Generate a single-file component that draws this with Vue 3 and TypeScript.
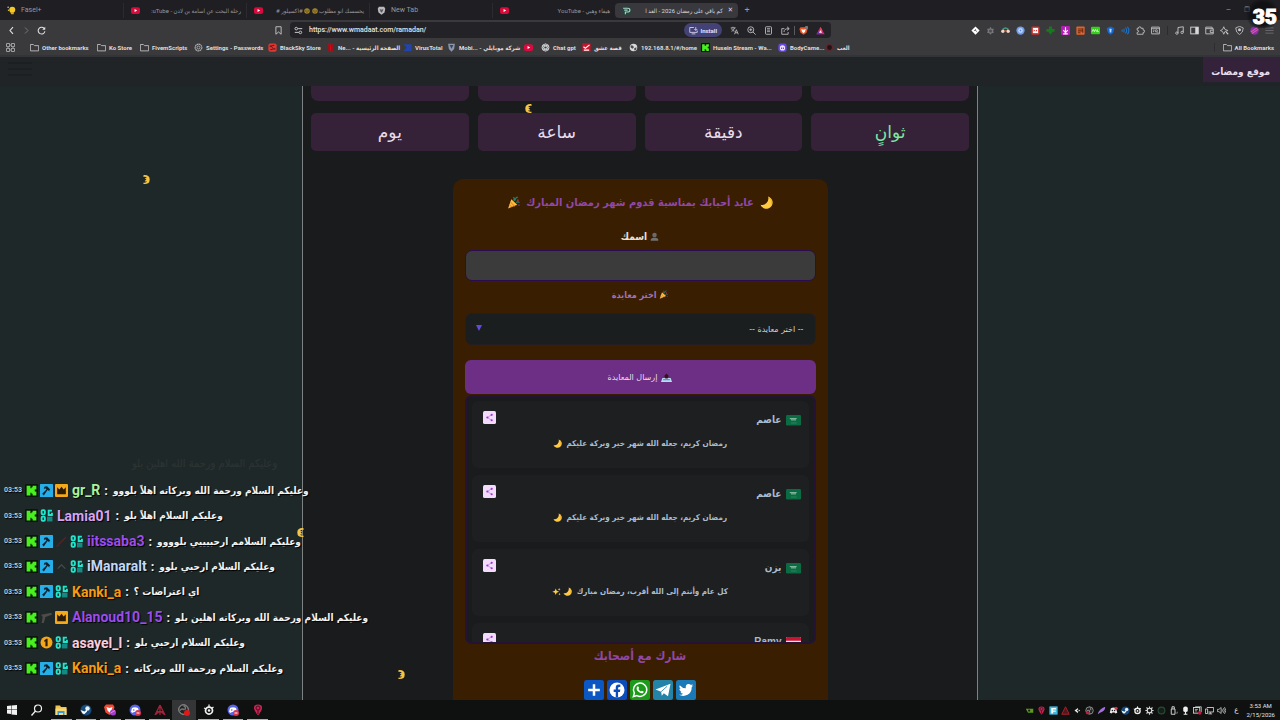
<script setup lang="ts">
import { h, ref } from 'vue'

const glyphs: Record<string, string> = {
  youtube: '<rect x="0" y="3" width="24" height="18" rx="5" fill="#d90a3c"/><path d="M9.5 8v8l7-4z" fill="#fff"/>',
  fasel: '<circle cx="14" cy="10" r="8" fill="#f3c927"/><path d="M9 16h9v6h-7z" fill="#d9ac1c"/><circle cx="3" cy="3" r="2" fill="#d8d8a0"/><circle cx="4" cy="11" r="2" fill="#e8c840"/>',
  shield: '<path d="M5 2h14l3 5-2 10-8 6-8-6L2 7z" fill="#b9babd"/><path d="M7 8l5 2 5-2-2 6-3 4-3-4z" fill="#55565a"/>',
  wmd: '<rect x="1" y="1" width="22" height="22" rx="7" fill="#23463e"/><path d="M3 6h12q6 0 6 5t-7 5H9v6M6 11h9" fill="none" stroke="#a9d5c5" stroke-width="3"/>',
  back: '<path d="M16 3l-8 9 8 9" fill="none" stroke="#e2e2e4" stroke-width="3"/>',
  forward: '<path d="M8 4l8 8-8 8" fill="none" stroke="#77777b" stroke-width="2.6"/>',
  reload: '<path d="M20 8a9 9 0 1 0 1 6" fill="none" stroke="#e2e2e4" stroke-width="2.8"/><path d="M22 2v8h-8z" fill="#e2e2e4"/>',
  bookmark: '<path d="M5 2h14v20l-7-6-7 6z" fill="none" stroke="#c8c8cc" stroke-width="2.4"/>',
  tune: '<path d="M11 7h11M2 17h11" stroke="#d4d4d6" stroke-width="2.5"/><circle cx="6" cy="7" r="3.5" fill="none" stroke="#d4d4d6" stroke-width="2.4"/><circle cx="17" cy="17" r="3.5" fill="none" stroke="#d4d4d6" stroke-width="2.4"/>',
  install: '<path d="M13 4H2v13h20v-5M7 21h10M18 3v8M14 8l4 4 4-4" fill="none" stroke="#dcdcf4" stroke-width="2.2"/>',
  translate: '<path d="M2 5h13M8 2v3M4 14c5-2 7-5 8-9M4 7c2 4 5 6 8 7M12 22l5-12 5 12M14 18h6" fill="none" stroke="#c8c8cc" stroke-width="2.2"/>',
  zoom: '<circle cx="10" cy="10" r="8" fill="none" stroke="#c8c8cc" stroke-width="2.2"/><path d="M16 16l7 7M6 10h8M10 6v8" stroke="#c8c8cc" stroke-width="2.2"/>',
  reader: '<rect x="4" y="2" width="16" height="20" rx="2" fill="none" stroke="#c8c8cc" stroke-width="2.2"/><path d="M8 7h8M8 11h8M8 15h8" stroke="#c8c8cc" stroke-width="2"/>',
  share: '<path d="M9 7H2v15h17v-6M8 16c0-6 4-9 13-9M16 2l6 5-6 5" fill="none" stroke="#c8c8cc" stroke-width="2.2"/>',
  brave: '<path d="M4 3h16l3 5-3 10-8 5-8-5L1 8z" fill="#ef5527"/><path d="M6 8l6 2 6-2-2 7-4 4-4-4z" fill="#fff"/><rect x="16" y="0" width="8" height="8" rx="2" fill="#77787c"/>',
  bat: '<path d="M12 2l11 20H1z" fill="#c12a80"/><path d="M12 2l5 11-5 2z" fill="#ff5a2a"/><path d="M12 11l4 7H8z" fill="#fff"/><path d="M1 22l5-8 5 8z" fill="#6a2ac0"/>',
  grid: '<g fill="none" stroke="#d0d0d3" stroke-width="2.6"><rect x="1" y="1" width="9" height="9" rx="3"/><rect x="14" y="1" width="9" height="9" rx="3"/><rect x="1" y="14" width="9" height="9" rx="3"/><rect x="14" y="14" width="9" height="9" rx="3"/></g>',
  folder: '<path d="M1 4h8l3 3h11v14H1z" fill="none" stroke="#c8c8cc" stroke-width="2.2"/>',
  gear: '<circle cx="12" cy="12" r="9" fill="none" stroke="#b0b0b4" stroke-width="3" stroke-dasharray="5 1"/><circle cx="12" cy="12" r="4" fill="none" stroke="#b0b0b4" stroke-width="2.4"/>',
  blacksky: '<rect x="1" y="1" width="22" height="22" rx="5" fill="#e33631"/><path d="M17 6L8 8l7 8-9 2M6 6v5M18 13v5" fill="none" stroke="#4a1a1c" stroke-width="2.4"/>',
  netflix: '<path d="M6 1h5l7 22h-5z" fill="#e50914"/><path d="M6 1h5v22H6zM13 1h5v22h-5z" fill="#b00812"/>',
  virustotal: '<path d="M1 3h22v18H1l9-9z" fill="#2344a8"/>',
  mobile: '<path d="M3 2h18l-2 14-7 7-7-7z" fill="#8a96ad"/><path d="M7 5h10l-5 10z" fill="#39445c"/>',
  gpt: '<g fill="none" stroke="#d0d0d3" stroke-width="2.2"><circle cx="12" cy="12" r="9.5"/><ellipse cx="12" cy="12" rx="4" ry="9"/><ellipse cx="12" cy="12" rx="4" ry="9" transform="rotate(60 12 12)"/><ellipse cx="12" cy="12" rx="4" ry="9" transform="rotate(120 12 12)"/></g>',
  love: '<rect x="1" y="1" width="22" height="22" fill="#c9152c"/><path d="M4 10l5 4L20 5M5 19h14" fill="none" stroke="#fff" stroke-width="3"/>',
  globe: '<circle cx="12" cy="12" r="10" fill="#d8d8da"/><path d="M5 6l6 1 2 5-4 3-5-4zM14 14l6-3-1 7-5 2z" fill="#4b4b50"/>',
  kick: '<rect width="24" height="24" rx="2" fill="#0b160a"/><path d="M3 3h7v5h2V6h2V3h7v7h-3v4h3v7h-7v-3h-2v-2h-2v5H3z" fill="#48f020"/>',
  bodycam: '<rect x="1" y="1" width="22" height="22" rx="6" fill="#6a45ee"/><circle cx="12" cy="13" r="7" fill="#ece6ff"/><path d="M8 12h3v4H8zM13 12h3v4h-3z" fill="#6a45ee"/>',
  rose: '<circle cx="12" cy="12" r="8" fill="#221416" stroke="#61262e" stroke-width="3"/>',
  e1: '<path d="M12 1l11 11-11 11L1 12z" fill="#fff"/><path d="M12 8v4l4 3M8 12h4" stroke="#555" stroke-width="2" fill="none"/>',
  e2: '<path d="M12 2l3 5h6l-2 6 2 5-6 1-3 4-3-4-6-1 2-5-2-6h6z" fill="#77787c"/><circle cx="12" cy="13" r="4" fill="#4c4d50"/>',
  e3: '<path d="M5 9q7-7 14 0" stroke="#3f9a84" stroke-width="4" fill="none"/><circle cx="5" cy="14" r="4.5" fill="#f2d6cc"/><circle cx="19" cy="14" r="4.5" fill="#f2d6cc"/><path d="M8 13h8" stroke="#c96a4a" stroke-width="3"/>',
  e4: '<circle cx="12" cy="12" r="11" fill="#6f9df0"/><circle cx="12" cy="12" r="6" fill="#cfe0ff"/><circle cx="12" cy="12" r="2.5" fill="#5a86e0"/>',
  e5: '<rect x="1" y="1" width="22" height="22" rx="3" fill="#c8322e"/><rect x="5" y="5" width="14" height="14" fill="#fff"/><path d="M7 9l4 3-4 3zM13 9l4 3-4 3z" fill="#c8322e"/>',
  e6: '<path d="M8 1h8v7h7v7h-5l-6 8-6-8H1V8h7z" fill="#167a1c"/>',
  e7: '<rect width="24" height="24" rx="3" fill="#b31fb4"/><path d="M12 3v13M6 11l6 7 6-7M6 21h12" stroke="#fff" stroke-width="3" fill="none"/>',
  e8: '<rect x="1" y="1" width="22" height="22" rx="2" fill="#e2632a"/><path d="M5 8h12M5 13h12M5 18h7M18 6v12" stroke="#6b2a12" stroke-width="3"/>',
  e9: '<rect y="2" width="24" height="20" rx="3" fill="#35cf1a"/><path d="M3 15l3-6 3 6 3-6 3 6M17 9v6h4" stroke="#d9ffd0" stroke-width="2.4" fill="none"/>',
  e10: '<path d="M12 1l10 4q0 13-10 18Q2 18 2 5z" fill="#1665c8"/><path d="M9 7h6l-1 10h-4z" fill="#bcd8ff"/>',
  e11: '<path d="M3 9v6M8 7v10M12 4q6 8 0 16M17 2q8 10 0 20" stroke="#1c74c8" stroke-width="2.8" fill="none"/>',
  puzzle: '<path d="M4 6h4q-1-4 3-4t3 4h6v5q4-1 4 3t-4 3v5H4v-5q4 0 4-3t-4-3z" fill="none" stroke="#c8c8cc" stroke-width="2.2" transform="translate(-1)"/>',
  searchtab: '<rect x="1" y="3" width="22" height="18" rx="1" fill="none" stroke="#c8c8cc" stroke-width="2.4"/><path d="M1 7h22M5 11h4M5 15h3" stroke="#c8c8cc" stroke-width="2"/><circle cx="14" cy="13" r="3" fill="none" stroke="#c8c8cc" stroke-width="2"/><path d="M16 15l4 4" stroke="#c8c8cc" stroke-width="2"/>',
  music: '<path d="M8 19V4l14-2v15" fill="none" stroke="#c8c8cc" stroke-width="2.4"/><circle cx="5" cy="19" r="3.2" fill="none" stroke="#c8c8cc" stroke-width="2.2"/><circle cx="19" cy="17" r="3.2" fill="none" stroke="#c8c8cc" stroke-width="2.2"/>',
  panel: '<rect x="2" y="3" width="20" height="18" fill="none" stroke="#d8d8da" stroke-width="2.4"/><path d="M14 3h8v18h-8z" fill="#d8d8da"/>',
  wallet: '<path d="M2 3h17v4h3v14H2zM2 7h18M22 11h-8v6h8" fill="none" stroke="#c8c8cc" stroke-width="2.3"/>',
  spark: '<path d="M10 2l3 7 8 3-8 3-3 7-3-7-6-3 6-3z" fill="none" stroke="#c8c8cc" stroke-width="2.2"/><path d="M16 16l6 6" stroke="#c8c8cc" stroke-width="3"/>',
  vpn: '<path d="M12 1l10 4q0 13-10 18Q2 18 2 5z" fill="none" stroke="#c8c8cc" stroke-width="2.2"/><circle cx="12" cy="10" r="4" fill="#c8c8cc"/>',
  profile: '<circle cx="12" cy="12" r="11" fill="#8b2fb0"/><path d="M2 16L20 4M5 20L22 9" stroke="#d85aa6" stroke-width="3"/>',
  menu: '<path d="M1 5h22M1 12h22M1 19h22" stroke="#6c6c70" stroke-width="2.4"/>',
  moon: '<path d="M15 1A11.500 11.500 0 1 1 1 16Q7 18 12 13 17 8 15 1z" fill="#ffca3e"/><path d="M15 1a11.500 11.500 0 0 1 4 18Q23 9 15 1z" fill="#f5a52a"/>',
  party: '<path d="M8 6l11 10L2 23z" fill="#fdbb3f"/><path d="M6 11l8 8M4 16l5 4" stroke="#e88a24" stroke-width="2"/><path d="M12 2q3 3 0 6M14 9q2-7 6-7M17 12q3-2 6 0" stroke="#28806d" stroke-width="2.2" fill="none"/><circle cx="20" cy="8" r="1.8" fill="#a32a48"/><circle cx="22" cy="17" r="1.6" fill="#5a2f88"/>',
  person: '<circle cx="12" cy="8" r="6" fill="#6a6a6c"/><path d="M2 23v-4q2-4 7-4h6q5 0 7 4v4z" fill="#717173"/><path d="M8 14h8v2H8z" fill="#3b3b3d"/>',
  outbox: '<path d="M3 13h18l3 9H0z" fill="#b9dcf4"/><path d="M5 15h14l1 3H4z" fill="#5b95c4"/><path d="M12 3l6 7h-3v4H9v-4H6z" fill="#3a0f22"/>',
  stars: '<path d="M10 4l2.500 6L19 12.500 12.500 15 10 21 7.500 15 1 12.500 7.500 10z" fill="#ffcf3f"/><path d="M19 2l1 3 3 1-3 1-1 3-1-3-3-1 3-1zM20 16l1 2 2 1-2 1-1 2-1-2-2-1 2-1z" fill="#ffcf3f"/>',
  sharenodes: '<rect width="24" height="24" rx="3" fill="#f3dcfb"/><path d="M16 7l-8 5 8 5" fill="none" stroke="#c88ae6" stroke-width="1.5"/><circle cx="16" cy="7" r="2" fill="#a234d6"/><circle cx="8" cy="12" r="2" fill="#a234d6"/><circle cx="16" cy="17" r="2" fill="#a234d6"/>',
  sa: '<rect y="3" width="24" height="17" rx="2" fill="#0b6b42"/><path d="M6 9h11M8 11h8" stroke="#8fbfa8" stroke-width="1.600"/><path d="M8 16h9" stroke="#2f8a60" stroke-width="1.400"/>',
  eg: '<rect y="3" width="24" height="18" rx="2" fill="#e8e8e8"/><path d="M0 9V5q0-2 2-2h20q2 0 2 2v4z" fill="#c81430"/><path d="M0 15h24v6H0z" fill="#111"/>',
  plus: '<rect width="24" height="24" rx="3" fill="#0b57c4"/><path d="M12 5v14M5 12h14" stroke="#fff" stroke-width="3"/>',
  facebook: '<rect width="24" height="24" rx="3" fill="#0d4dbb"/><circle cx="12" cy="12" r="9" fill="#fff"/><path d="M10.500 21v-6.500H8v-3h2.500V9q0-3.500 3.500-3.500h2v2.800h-1.300q-1.400 0-1.400 1.300v1.900H16l-.5 3h-2.200V21z" fill="#0d4dbb"/>',
  whatsapp: '<rect width="24" height="24" rx="3" fill="#1c9a1a"/><path d="M4 20l1.200-4.300a8 8 0 1 1 3.100 3z" fill="none" stroke="#fff" stroke-width="1.800"/><path d="M8.500 8q1-1.200 1.700 0l.7 1.600-.8 1.200q1 2 3 3l1.200-1 2 1q.5 1-.8 1.900-1.500 1-4.500-1T8 11q-.3-2 .5-3z" fill="#fff"/>',
  telegram: '<rect width="24" height="24" rx="3" fill="#2484a8"/><path d="M3 11.500L21 4.500 18 19.500l-5-3.500-2.500 2.800-.7-4.600z" fill="#fff"/><path d="M9.800 14l7.200-6.500" stroke="#2484a8" stroke-width="1"/>',
  twitter: '<rect width="24" height="24" rx="3" fill="#1a7ab8"/><path d="M3.500 17.800q3 .3 5-1.400-2.400-.2-3.300-2.400h1.500q-2.700-.8-2.800-3.500l1.500.4Q3 8.900 4.400 6.200q3.100 3.600 7.400 3.800-.8-4 2.600-5.100 2-.4 3.600 1.100l2.200-.9-1.400 2 2-.5-1.900 1.900q0 6.500-5 9.300-5.400 2.600-10.400 0z" fill="#fff"/>',
  hammer: '<rect width="24" height="24" rx="1" fill="#25aee8"/><path d="M8 5l5-1 6 6-2 1 1 3-4-3L7 21l-3-3 8-8-2-2-3 1z" fill="#10222e"/>',
  crown: '<rect width="24" height="24" rx="2" fill="#f5a81c"/><path d="M4 6l4 4 4-5 4 5 4-4v13H4z" fill="#2b1c06"/>',
  og: '<g fill="none" stroke="#1fe6cc" stroke-width="3.500"><rect x="3" y="2" width="6" height="8" rx="2"/><path d="M22 3h-6v8h6V7"/><rect x="3" y="14" width="6" height="8" rx="2"/></g><path d="M13 14h10v9H13z" fill="#158a84"/>',
  sword: '<path d="M3 21L20 4" stroke="#5a2426" stroke-width="2.500"/><path d="M4 15l6 6" stroke="#472022" stroke-width="2"/>',
  cross: '<path d="M5 16l7-7 7 7" fill="none" stroke="#4a4c4c" stroke-width="2"/>',
  gun: '<path d="M2 7l19-4 1 4-12 4-3 11H3l2-11z" fill="#4e4b48"/>',
  first: '<circle cx="12" cy="12" r="11" fill="#f3a51c"/><path d="M8 8l4-3h2v14h-4V9.500L8 11z" fill="#2b1c06"/>',
  windows: '<path d="M2 4l8-1v8H2zM11 3l11-1v9H11zM2 12h8v8l-8-1zM11 12h11v10l-11-1z" fill="#f2f2f2"/>',
  search: '<circle cx="14" cy="9" r="7" fill="none" stroke="#f2f2f2" stroke-width="2.400"/><path d="M9 14l-8 9" stroke="#f2f2f2" stroke-width="2.600"/>',
  explorer: '<path d="M1 3h9l2 3h11v16H1z" fill="#f0c44c"/><path d="M1 9h22v13H1z" fill="#f7d97a"/><path d="M5 14h14v8h-3v-4H8v4H5z" fill="#3c9ad8"/>',
  steam: '<circle cx="12" cy="12" r="11" fill="#174a7c"/><circle cx="15" cy="9" r="4.500" fill="#e8f0f8"/><path d="M1 12l8 3 5-4v4l-5 5q-4 0-5-3z" fill="#fff"/>',
  bravepro: '<path d="M4 1h14l3 5-3 11-7 5-8-5L0 6z" fill="#ef4a34"/><path d="M5 6l6 2 6-2-2 7-4 4-4-4z" fill="#fff"/><circle cx="18" cy="17" r="6" fill="#a13fd0"/><path d="M13 18l9-5" stroke="#f08ac8" stroke-width="2"/>',
  discord: '<circle cx="12" cy="12" r="11" fill="#5865e8"/><path d="M6 8q6-3 12 0l2 8-4 2-1-2H9l-1 2-4-2z" fill="#fff"/><circle cx="9.500" cy="12" r="1.600" fill="#5865e8"/><circle cx="18" cy="18" r="6" fill="#d6354f"/><path d="M15 18h6" stroke="#fff" stroke-width="2"/>',
  apex: '<path d="M12 2L2 22M12 2l10 20M12 2v20M6 15h12M3 21l9-7 9 7" fill="none" stroke="#a3243a" stroke-width="2.500"/>',
  obs: '<circle cx="12" cy="12" r="10" fill="#242424" stroke="#a8a8a8" stroke-width="2"/><path d="M12 3q6 3 3 8M4 14q4-5 9-1M14 21q-5-3-2-8" stroke="#b0b0b0" stroke-width="2" fill="none"/><circle cx="6" cy="18" r="4" fill="#c01c3c"/>',
  obsrec: '<circle cx="11" cy="11" r="9.500" fill="#242424" stroke="#a8a8a8" stroke-width="2"/><path d="M11 3q6 3 3 8M4 13q4-5 9-1" stroke="#777" stroke-width="3" fill="none"/><circle cx="18" cy="18" r="6" fill="#e01818"/>',
  steelseries: '<circle cx="12" cy="13" r="7" fill="none" stroke="#f0f0f0" stroke-width="3.500"/><circle cx="12" cy="13" r="2.500" fill="#f0f0f0"/><path d="M12 1v5M2 8l5 2M21 6l-4 3" stroke="#f0f0f0" stroke-width="2.500"/>',
  pin: '<path d="M12 1q9 0 8 8-1 5-8 14Q5 14 4 9 3 1 12 1z" fill="#c92453"/><circle cx="12" cy="8" r="4" fill="none" stroke="#46101f" stroke-width="2"/><path d="M12 12v8" stroke="#46101f" stroke-width="2"/>',
  nvidia: '<path d="M2 7h20v11H8z" fill="#5f9a1c"/><circle cx="11" cy="12" r="3" fill="#14200a"/>',
  faceit: '<rect x="1" y="1" width="22" height="22" fill="#42b6dc"/><path d="M6 5h13v4H11v3h7v3h-7v5H6z" fill="#f4fbff"/>',
  tri: '<path d="M12 2l10 20H2z" fill="#52161c" stroke="#a3242e" stroke-width="2.500"/>',
  arrows: '<path d="M13 5L4 12l9 7v-5l-3-2 3-2zM15 9l4 3-4 3z" fill="#eee"/>',
  feather: '<path d="M2 22Q5 8 22 2q0 12-14 16z" fill="#9f70d8"/>',
  disc: '<path d="M5 6q7-4 14 0l3 12-5 2-2-3H9l-2 3-5-2z" fill="#e8e8ea"/><circle cx="19" cy="6" r="4" fill="#d8304c"/><circle cx="9" cy="12" r="2" fill="#222"/><circle cx="15" cy="12" r="2" fill="#222"/>',
  cog: '<path d="M12 1v22M1 12h22M4 4l16 16M20 4L4 20" stroke="#d8d8da" stroke-width="3"/><circle cx="12" cy="12" r="6" fill="#161616" stroke="#d8d8da" stroke-width="3"/>',
  dark: '<circle cx="12" cy="12" r="9" fill="#132019" stroke="#2c4a38" stroke-width="3"/>',
  usb: '<path d="M6 8h10v14H6zM8 8V2h6v6" fill="none" stroke="#d8d8da" stroke-width="2.500"/><path d="M18 17l3 3 2-5" stroke="#9a9a9a" stroke-width="2" fill="none"/>',
  mic: '<rect x="6" y="1" width="12" height="15" rx="5" fill="#eee"/><path d="M12 15v7M7 22h10" stroke="#eee" stroke-width="3"/>',
  capture: '<rect x="1" y="4" width="17" height="15" fill="none" stroke="#d8d8da" stroke-width="2.500"/><path d="M6 2h16v14M5 9h8M5 13h6" stroke="#d8d8da" stroke-width="2" fill="none"/><circle cx="18" cy="18" r="5" fill="#c01c3c"/>',
  monitor: '<path d="M5 4h18v12H9M14 16v5M9 21h10M1 8h6v12H1z" fill="none" stroke="#d8d8da" stroke-width="2.300"/>',
  sound: '<path d="M1 9h4l6-5v16l-6-5H1z" fill="none" stroke="#d8d8da" stroke-width="2"/><path d="M14 9q2 3 0 6M17 6q5 6 0 12M20 3q7 9 0 18" fill="none" stroke="#d8d8da" stroke-width="2"/>',
  smile: '<circle cx="12" cy="12" r="11" fill="#a8882a"/><path d="M5 9h5M14 9h5M6 14q6 6 12 0" stroke="#3a2e10" stroke-width="2.500" fill="none"/>',
  crescent: '<path d="M18 2Q5 1 5 12t13 10q1-1 1-3-7 1-8-3 3 1 5-1l-4-3 4-2q-2-2-5-1 2-4 8-3 0-3-1-4z" fill="#f5c443"/>',
}

const Icon = (props: { name: string }) =>
  h('svg', { class: 'icon', viewBox: '0 0 24 24', 'aria-hidden': 'true', innerHTML: glyphs[props.name] })
Icon.props = ['name']

const bookmarks: { icon: string; text: string }[] = [
  { icon: 'folder', text: 'Other bookmarks' },
  { icon: 'folder', text: 'Ko Store' },
  { icon: 'folder', text: 'FivemScripts' },
  { icon: 'gear', text: 'Settings - Passwords' },
  { icon: 'blacksky', text: 'BlackSky Store' },
  { icon: 'netflix', text: 'Ne... - الصفحة الرئيسية' },
  { icon: 'virustotal', text: 'VirusTotal' },
  { icon: 'mobile', text: 'Mobi... - شركة موبايلي' },
  { icon: 'youtube', text: '' },
  { icon: 'gpt', text: 'Chat gpt' },
  { icon: 'love', text: 'قصة عشق' },
  { icon: 'globe', text: '192.168.8.1/#/home' },
  { icon: 'kick', text: 'Husein Stream - Wa...' },
  { icon: 'bodycam', text: 'BodyCame...' },
  { icon: 'rose', text: 'العب' },
]
const extensions = ['e1', 'e2', 'e3', 'e4', 'e5', 'e6', 'e7', 'e8', 'e9', 'e10', 'e11', 'puzzle', 'searchtab']
const browserTools = ['music', 'panel', 'wallet', 'spark', 'vpn', 'profile', 'menu']

const units = ['ثوانٍ', 'دقيقة', 'ساعة', 'يوم']
const wishes = [
  { flag: 'sa', name: 'عاصم', text: 'رمضان كريم، جعله الله شهر خير وبركة عليكم', marks: ['moon'] },
  { flag: 'sa', name: 'عاصم', text: 'رمضان كريم، جعله الله شهر خير وبركة عليكم', marks: ['moon'] },
  { flag: 'sa', name: 'يزن', text: 'كل عام وأنتم إلى الله أقرب، رمضان مبارك', marks: ['moon', 'stars'] },
  { flag: 'eg', name: 'Ramy', text: '', marks: [] },
]
const networks = ['plus', 'facebook', 'whatsapp', 'telegram', 'twitter']

const chat = [
  { badges: ['kick', 'hammer', 'crown'], user: 'gr_R', tone: 'green', text: 'وعليكم السلام ورحمة الله وبركاته اهلاً بلووو' },
  { badges: ['kick', 'og'], user: 'Lamia01', tone: 'lilac', text: 'وعليكم السلام اهلاً بلو' },
  { badges: ['kick', 'hammer', 'sword', 'og'], user: 'iitssaba3', tone: 'violet', text: 'وعليكم السلامم ارحبيييي بلوووو' },
  { badges: ['kick', 'hammer', 'cross', 'og'], user: 'iManaralt', tone: 'sky', text: 'وعليكم السلام ارحبي بلوو' },
  { badges: ['kick', 'hammer', 'og'], user: 'Kanki_a', tone: 'orange', text: 'اي اعتراضات ؟' },
  { badges: ['kick', 'gun', 'crown'], user: 'Alanoud10_15', tone: 'violet', text: 'وعليكم السلام ورحمة الله وبركاته اهلين بلو' },
  { badges: ['kick', 'first', 'og'], user: 'asayel_l', tone: 'pink', text: 'وعليكم السلام ارحبي بلو' },
  { badges: ['kick', 'hammer', 'og'], user: 'Kanki_a', tone: 'orange', text: 'وعليكم السلام ورحمة الله وبركاته' },
]

const apps = ['windows', 'search', 'explorer', 'steam', 'bravepro', 'discord', 'apex', 'obsrec', 'steelseries', 'discord', 'pin']
const tray = ['nvidia', 'pin', 'faceit', 'tri', 'arrows', 'obs', 'feather', 'disc', 'steam', 'steelseries', 'cog', 'dark', 'usb', 'mic', 'capture', 'monitor', 'sound']

const address = ref('https://www.wmadaat.com/ramadan/')
const visitor = ref('')
const greeting = ref('')
</script>

<template>
  <div class="screen">
    <header class="browser">
      <div class="tabs">
        <div class="tab"><Icon name="fasel" /><span>Fasel+</span></div>
        <div class="tab"><Icon name="youtube" /><span class="rtl">رحلة البحث عن اسامة بن لادن - uTube:</span></div>
        <div class="tab">
          <Icon name="youtube" /><span class="rtl">يحسسك انو مطلوب <Icon name="smile" /> <Icon name="smile" /> #اكسيلور #</span>
        </div>
        <div class="tab"><Icon name="shield" /><span>New Tab</span></div>
        <div class="tab"><Icon name="youtube" /><span class="rtl">هيفاء وهبي - YouTube</span></div>
        <div class="tab tab-active">
          <Icon name="wmd" /><span class="rtl">كم باقي على رمضان 2026 - العد ا</span><button aria-label="Close tab">✕</button>
        </div>
        <button class="new-tab" aria-label="New tab">+</button>
        <div class="window-buttons">
          <button aria-label="Minimize">─</button>
          <button aria-label="Restore">❐</button>
        </div>
      </div>

      <div class="toolbar">
        <div class="nav">
          <button aria-label="Back"><Icon name="back" /></button>
          <button aria-label="Forward"><Icon name="forward" /></button>
          <button aria-label="Reload"><Icon name="reload" /></button>
        </div>
        <button class="save" aria-label="Bookmark"><Icon name="bookmark" /></button>
        <div class="address">
          <Icon name="tune" />
          <input v-model="address" aria-label="Address" />
          <button class="install"><Icon name="install" />Install</button>
          <button v-for="n in ['translate', 'zoom', 'reader', 'share']" :key="n" :aria-label="n"><Icon :name="n" /></button>
          <i class="divider"></i>
          <button v-for="n in ['brave', 'bat']" :key="n" :aria-label="n"><Icon :name="n" /></button>
        </div>
        <div class="extensions">
          <button v-for="n in extensions" :key="n" :aria-label="n"><Icon :name="n" /></button>
          <i class="divider"></i>
          <button v-for="n in browserTools" :key="n" :aria-label="n"><Icon :name="n" /></button>
        </div>
      </div>

      <nav class="bookmarks">
        <button class="apps-button" aria-label="Apps"><Icon name="grid" /></button>
        <div class="bookmark-list">
          <a v-for="b in bookmarks" :key="b.icon + b.text" href="#" class="bookmark"><Icon :name="b.icon" /><span>{{ b.text }}</span></a>
        </div>
        <a href="#" class="bookmark all"><Icon name="folder" /><span>All Bookmarks</span></a>
      </nav>
      <div class="fps">35</div>
    </header>

    <main class="site">
      <div class="site-bar">
        <button class="burger" aria-label="Menu"><i></i><i></i><i></i></button>
        <a href="#" class="brand">موقع ومضات</a>
      </div>

      <div class="site-body">
        <div class="column" dir="rtl">
          <div class="counters">
            <div v-for="u in units" :key="'v' + u" class="counter-value"></div>
            <div v-for="u in units" :key="u" class="counter-unit">{{ u }}</div>
          </div>

          <section class="card">
            <h2><Icon name="moon" /> عايد أحبابك بمناسبة قدوم شهر رمضان المبارك <Icon name="party" /></h2>
            <label class="name-label" for="visitor"><Icon name="person" /> اسمك</label>
            <input id="visitor" v-model="visitor" type="text" />
            <label class="greeting-label" for="greeting"><Icon name="party" /> اختر معايدة</label>
            <div class="select-box">
              <select id="greeting" v-model="greeting">
                <option value="">-- اختر معايدة --</option>
              </select>
              <i class="caret"></i>
            </div>
            <button class="send"><Icon name="outbox" /> إرسال المعايدة</button>

            <ul class="wishes">
              <li v-for="(w, i) in wishes" :key="i">
                <div class="wish-head">
                  <strong><Icon :name="w.flag" />{{ w.name }}</strong>
                  <button aria-label="Share"><Icon name="sharenodes" /></button>
                </div>
                <p v-if="w.text">{{ w.text }} <Icon v-for="m in w.marks" :key="m" :name="m" /></p>
              </li>
            </ul>

            <h3>شارك مع أصحابك</h3>
            <div class="networks" dir="ltr">
              <a v-for="n in networks" :key="n" href="#" :aria-label="n"><Icon :name="n" /></a>
            </div>
          </section>
        </div>
      </div>

      <Icon name="crescent" class="drift drift-a" />
      <Icon name="crescent" class="drift drift-b flip" />
      <Icon name="crescent" class="drift drift-c" />
      <Icon name="crescent" class="drift drift-d flip" />

      <div class="chat">
        <p class="fading">وعليكم السلام ورحمة الله اهلين بلو</p>
        <div v-for="(m, i) in chat" :key="i" class="line">
          <time>03:53</time>
          <Icon v-for="b in m.badges" :key="b" :name="b" />
          <b :class="m.tone">{{ m.user }}</b>
          <span class="colon">:</span>
          <span class="message" dir="rtl">{{ m.text }}</span>
        </div>
      </div>
    </main>

    <footer class="taskbar">
      <div class="apps">
        <button v-for="(a, i) in apps" :key="i" :class="{ open: i > 1 && i !== 7, current: i === 7 }" :aria-label="a"><Icon :name="a" /></button>
      </div>
      <div class="tray">
        <Icon v-for="(t, i) in tray" :key="i" :name="t" />
        <span class="lang">ع</span>
        <div class="clock"><span>3:53 AM</span><span>2/15/2026</span></div>
      </div>
    </footer>
  </div>
</template>

<style>
body {
  margin: 0;
  background: #1b1c1d;
}
</style>

<style scoped>
* {
  box-sizing: border-box;
}
.screen {
  display: flex;
  flex-direction: column;
  height: 100vh;
  overflow: hidden;
  font-family: Roboto, "DejaVu Sans Condensed", "DejaVu Sans", sans-serif;
  color: #e4e4e6;
}
button {
  display: flex;
  align-items: center;
  justify-content: center;
  padding: 0;
  border: 0;
  background: none;
  color: inherit;
  font: inherit;
}
a {
  color: inherit;
  text-decoration: none;
}
.icon {
  flex: none;
  width: 9px;
  height: 9px;
}

/* browser chrome */
.browser {
  position: relative;
  flex: none;
  background: #3a3a3d;
}
.tabs {
  display: grid;
  grid-template-columns: repeat(6, 123px) 18px 1fr;
  align-items: center;
  height: 20px;
  background: #1f1e23;
  font-size: 7px;
  color: #98989c;
}
.tab {
  display: flex;
  align-items: center;
  gap: 5px;
  height: 15px;
  padding: 0 5px 0 7px;
  white-space: nowrap;
}
.tab + .tab:not(.tab-active) {
  border-left: 1px solid #2b2a30;
}
.tab .rtl {
  flex: 1;
  direction: rtl;
  font-size: 6px;
  line-height: 15px;
}
.tab span .icon {
  width: 6px;
  height: 6px;
  vertical-align: -1px;
}
.tab-active {
  border-radius: 4px;
  background: #39383d;
  color: #d8d8dc;
}
.new-tab {
  font-size: 9px;
}
.window-buttons {
  display: flex;
  justify-content: flex-end;
  gap: 14px;
  padding-right: 30px;
}
.toolbar {
  display: flex;
  align-items: center;
  height: 20px;
  padding: 0 6px;
}
.nav {
  display: flex;
  flex: 0 1 265px;
  gap: 5px;
}
.nav button {
  width: 10px;
}
.save {
  width: 14px;
}
.address {
  display: flex;
  flex: 0 1 541px;
  align-items: center;
  gap: 8px;
  height: 16px;
  margin-left: 5px;
  padding: 0 6px 0 4px;
  border-radius: 4px;
  background: #222227;
}
.address input {
  flex: 1;
  min-width: 0;
  margin-left: -2px;
  padding: 0;
  border: 0;
  outline: 0;
  background: none;
  color: #e4e4e6;
  font: 500 7px Roboto, sans-serif;
}
.install {
  gap: 2px;
  height: 14px;
  padding: 0 5px;
  border-radius: 7px;
  background: #444174;
  color: #e2e0ff;
  font: 700 6px Roboto, sans-serif;
}
.divider {
  width: 1px;
  height: 9px;
  background: #5a5a60;
}
.address .divider {
  margin: 0 -4px;
}
.extensions {
  display: flex;
  flex: 1;
  align-items: center;
  justify-content: flex-end;
  gap: 6px;
}
.extensions .divider {
  margin: 0 1px;
  background: #2c2c30;
}
.bookmarks {
  display: flex;
  align-items: center;
  height: 17px;
  padding: 0 6px;
  border-bottom: 2px solid #333437;
  font-size: 6px;
  font-weight: 700;
  color: #dededf;
}
.apps-button {
  width: 9px;
}
.bookmark-list {
  display: grid;
  flex: 1;
  grid-template-columns: 67px 43px 54px 74px 58px 77px 44px 77px 17px 41px 47px 72px 77px 47px 32px;
  padding-left: 15px;
}
.bookmark {
  display: flex;
  align-items: center;
  gap: 3px;
  white-space: nowrap;
}
.all {
  padding-left: 8px;
  border-left: 1px solid #2e2e32;
}
.fps {
  position: absolute;
  top: 0;
  right: 0;
  padding: 6px 3px 0 8px;
  border-radius: 12px;
  background: radial-gradient(circle, #111113 50%, transparent 75%);
  color: #fff;
  font: 900 21px/22px Roboto, sans-serif;
  -webkit-text-stroke: 1px #fff;
}

/* page */
.site {
  position: relative;
  flex: 1;
  min-height: 0;
  overflow: hidden;
  background: #1f2828;
  font-family: "DejaVu Sans Condensed", "DejaVu Sans", sans-serif;
}
.site-bar {
  display: flex;
  justify-content: space-between;
  height: 29px;
  background: #212426;
}
.burger {
  flex-direction: column;
  gap: 4px;
  width: 24px;
  height: 24px;
  margin-left: 8px;
}
.burger i {
  width: 24px;
  height: 2px;
  background: #1c1e20;
}
.brand {
  height: 25px;
  padding: 0 10px 0 8px;
  background: #34213a;
  color: #e9dcec;
  font-size: 10px;
  font-weight: 700;
  line-height: 30px;
}
.column {
  width: 100%;
  max-width: 676px;
  margin: 0 auto;
  padding: 0 8px;
  border: solid #7d8181;
  border-width: 0 1px;
  background: #1a1b1c;
}
.counters {
  display: grid;
  grid-template-columns: repeat(4, 1fr);
  gap: 12px 9px;
}
.counter-value {
  height: 15px;
  border-radius: 0 0 7px 7px;
  background: #352238;
}
.counter-unit {
  height: 38px;
  border-radius: 5px;
  background: #352238;
  color: #e8dcea;
  font-family: "DejaVu Sans", sans-serif;
  font-size: 17px;
  line-height: 38px;
  text-align: center;
}
.counter-unit:nth-child(5) {
  color: #7ce8a4;
}
.card {
  display: flex;
  flex-direction: column;
  width: 100%;
  max-width: 375px;
  margin: 28px auto 0;
  padding: 12px 12px 30px;
  border-radius: 10px;
  background: #391e02;
  text-align: center;
}
h2,
h3 {
  margin: 0;
  color: #9147a8;
  font-size: 12px;
  font-weight: 700;
  line-height: 24px;
}
h2 {
  font-size: 11px;
}
h2 .icon {
  width: 13px;
  height: 13px;
  margin: 0 3px;
  vertical-align: -3px;
}
label {
  font-size: 10px;
  font-weight: 700;
}
.name-label {
  padding-top: 12px;
  color: #e6e0d6;
  line-height: 20px;
}
.greeting-label {
  color: #a074b8;
  font-size: 9px;
  line-height: 28px;
}
label .icon {
  vertical-align: -1px;
}
#visitor {
  height: 31px;
  margin-top: 3px;
  padding: 0 10px;
  border: 1px solid #2c0c50;
  border-radius: 7px;
  outline: 0;
  background: #3b3b3b;
  color: #eee;
}
.select-box {
  position: relative;
  margin-top: 4px;
}
select {
  display: block;
  width: 100%;
  height: 32px;
  padding: 0 11px;
  border: 1px solid #241d24;
  border-radius: 7px;
  appearance: none;
  background: #1b1e1f;
  color: #d4d2ce;
  font: 8px "DejaVu Sans", sans-serif;
}
.caret {
  position: absolute;
  top: 12px;
  left: 11px;
  border: 3px solid transparent;
  border-top: 6px solid #6449dc;
  border-bottom: 0;
}
.send {
  gap: 4px;
  height: 34px;
  margin-top: 15px;
  border-radius: 6px;
  background: #6d2f86;
  color: #eadcec;
  font: 8px "DejaVu Sans", sans-serif;
}
.send .icon {
  width: 11px;
  height: 11px;
}
.wishes {
  display: flex;
  flex-direction: column;
  gap: 7px;
  height: 249px;
  margin: 1px 0 0;
  padding: 4px 5px;
  overflow: hidden;
  border: 2px solid #241334;
  border-radius: 7px;
  background: #1a1b1d;
  list-style: none;
}
.wishes li {
  flex: none;
  height: 67px;
  padding: 10px 8px 0;
  border-radius: 6px;
  background: #1d1f20;
  color: #a9bccd;
}
.wish-head {
  display: flex;
  align-items: flex-start;
  justify-content: space-between;
  padding-left: 3px;
}
.wish-head strong {
  display: flex;
  align-items: center;
  gap: 4px;
  padding-top: 1px;
  font-family: "Liberation Sans", "DejaVu Sans Condensed", sans-serif;
  font-size: 10px;
  line-height: 16px;
}
.wish-head strong .icon {
  width: 15px;
  height: 15px;
}
.wish-head button .icon {
  width: 13px;
  height: 13px;
}
.wishes p {
  margin: 8px 0 0;
  font-size: 8px;
  font-weight: 700;
  line-height: 16px;
}
.wishes p .icon {
  margin-right: 2px;
  vertical-align: -2px;
}
.networks {
  display: flex;
  justify-content: center;
  gap: 3px;
  padding-top: 12px;
}
.networks a {
  display: flex;
}
.networks .icon {
  width: 20px;
  height: 20px;
}
.drift {
  position: absolute;
  width: 11px;
  height: 11px;
}
.flip {
  transform: scaleX(-1);
}
.drift-a {
  left: 523px;
  top: 46px;
}
.drift-b {
  left: 141px;
  top: 117px;
}
.drift-c {
  left: 295px;
  top: 470px;
}
.drift-d {
  left: 396px;
  top: 612px;
}

/* stream chat */
.chat {
  position: absolute;
  bottom: 19px;
  left: 4px;
  display: grid;
  grid-auto-rows: 1fr;
  height: 229px;
}
.fading {
  margin: 0;
  padding-left: 128px;
  opacity: 0.06;
  font-size: 11px;
  line-height: 24px;
}
.line {
  display: flex;
  align-items: center;
  gap: 2px;
  color: #f2f2f2;
  text-shadow: 1px 1px 1px #000;
  white-space: nowrap;
}
.line .icon {
  width: 13px;
  height: 13px;
}
.line time {
  width: 19px;
  color: #c4c6c6;
  font: 700 7px Roboto, sans-serif;
}
.line b {
  padding-left: 2px;
  font: 700 14px Roboto, sans-serif;
}
.colon {
  padding: 0 3px 0 2px;
  font: 700 13px Roboto, sans-serif;
}
.message {
  font-size: 10px;
  font-weight: 700;
}
.green { color: #a8f39c; }
.lilac { color: #d8a4f2; }
.violet { color: #9c4cf0; }
.sky { color: #c2d8f4; }
.orange { color: #f79a14; }
.pink { color: #fbcddb; }

/* taskbar */
.taskbar {
  display: flex;
  flex: none;
  justify-content: space-between;
  height: 20px;
  background: #0f1010;
}
.apps {
  display: grid;
  grid-template-columns: repeat(11, 1fr);
  width: 270px;
}
.apps button {
  position: relative;
}
.apps .icon {
  width: 12px;
  height: 12px;
}
.current {
  background: #343536;
}
.open::after {
  position: absolute;
  right: 2px;
  bottom: 0;
  left: 2px;
  height: 1px;
  background: #aeb0b0;
  content: "";
}
.tray {
  display: flex;
  align-items: center;
  gap: 3px;
  padding-right: 5px;
}
.lang {
  padding: 0 5px;
  font: 7px "DejaVu Sans", sans-serif;
}
.clock {
  display: flex;
  flex-direction: column;
  align-items: center;
  font-size: 6px;
  line-height: 9px;
}
</style>
